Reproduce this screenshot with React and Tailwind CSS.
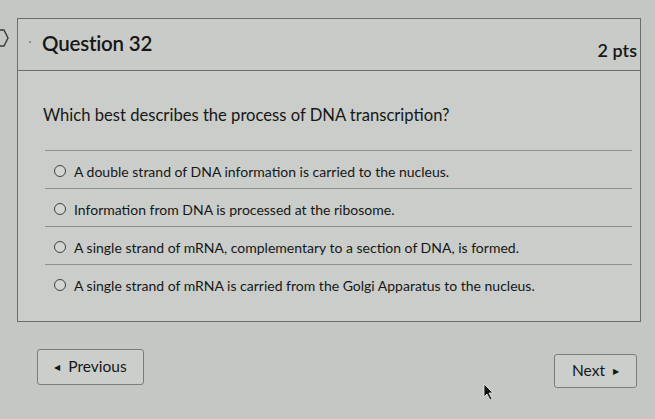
import React from 'react';

const answers = [
  'A double strand of DNA information is carried to the nucleus.',
  'Information from DNA is processed at the ribosome.',
  'A single strand of mRNA, complementary to a section of DNA, is formed.',
  'A single strand of mRNA is carried from the Golgi Apparatus to the nucleus.',
];

function Radio() {
  return <span className="w-[12px] h-[12px] rounded-full border-[1.5px] border-[#3f4140] bg-[#d3d5d2] shrink-0" />;
}

export default function App() {
  return (
    <div
      className="relative w-[655px] h-[419px] overflow-hidden bg-[#c5c7c4] text-[#161716]"
      style={{ fontFamily: 'Lato, "Open Sans", sans-serif' }}
    >
      {/* collapse chevron peeking at the left edge */}
      <svg className="absolute left-[-4px] top-[29px]" width="14" height="18" viewBox="0 0 14 18">
        <path d="M2 1 L8 1 L12 9 L8 17 L2 17" fill="none" stroke="#3a3c3b" strokeWidth="1.4" />
      </svg>
      <span className="absolute left-[29px] top-[41px] w-[2px] h-[2px] rounded-full bg-[#777]" />

      <div className="ml-[17px] mt-[18px] w-[624px] border border-[#6c6e6c]">
        <div className="h-[52px] flex items-center justify-between pl-[24px] pr-[3px] bg-[#c9cbc8] border-b border-[#6c6e6c]">
          <span className="text-[20.5px] font-semibold tracking-[-0.2px] mb-[3px]">Question 32</span>
          <span className="text-[18px] font-semibold mt-[11px]">2 pts</span>
        </div>
        <div className="bg-[#cacdc9] pt-[33px] pb-[19px]">
          <p className="pl-[25px] text-[16.6px] leading-[22px]">Which best describes the process of DNA transcription?</p>
          <div className="mt-[24px] ml-[27px] mr-[8px]">
            {answers.map((a) => (
              <div key={a} className="h-[38px] flex items-center gap-[8px] pl-[9px] border-t border-[#8d8f8d] pt-[3px]">
                <Radio />
                <span className="text-[14px]">{a}</span>
              </div>
            ))}
          </div>
        </div>
      </div>

      <div className="flex justify-between items-start mt-[27px] pl-[37px] pr-[18px]">
        <button className="w-[107px] h-[36px] flex items-center justify-center gap-[8px] rounded-[3px] border border-[#7b7d7b] bg-[#cbcecb] text-[15.5px]">
          <span className="text-[8px]">◀</span>
          <span>Previous</span>
        </button>
        <button className="mt-[5px] w-[83px] h-[34px] flex items-center justify-center gap-[8px] rounded-[3px] border border-[#7b7d7b] bg-[#cbcecb] text-[15.5px]">
          <span>Next</span>
          <span className="text-[8px]">▶</span>
        </button>
      </div>

      {/* mouse pointer */}
      <svg className="absolute left-[483px] top-[383px]" width="12" height="18" viewBox="0 0 12 18">
        <path d="M1 1 L1 14 L4 11 L7 17 L9 16 L6 10 L10 10 Z" fill="#111" stroke="#eee" strokeWidth="0.8" />
      </svg>
    </div>
  );
}
